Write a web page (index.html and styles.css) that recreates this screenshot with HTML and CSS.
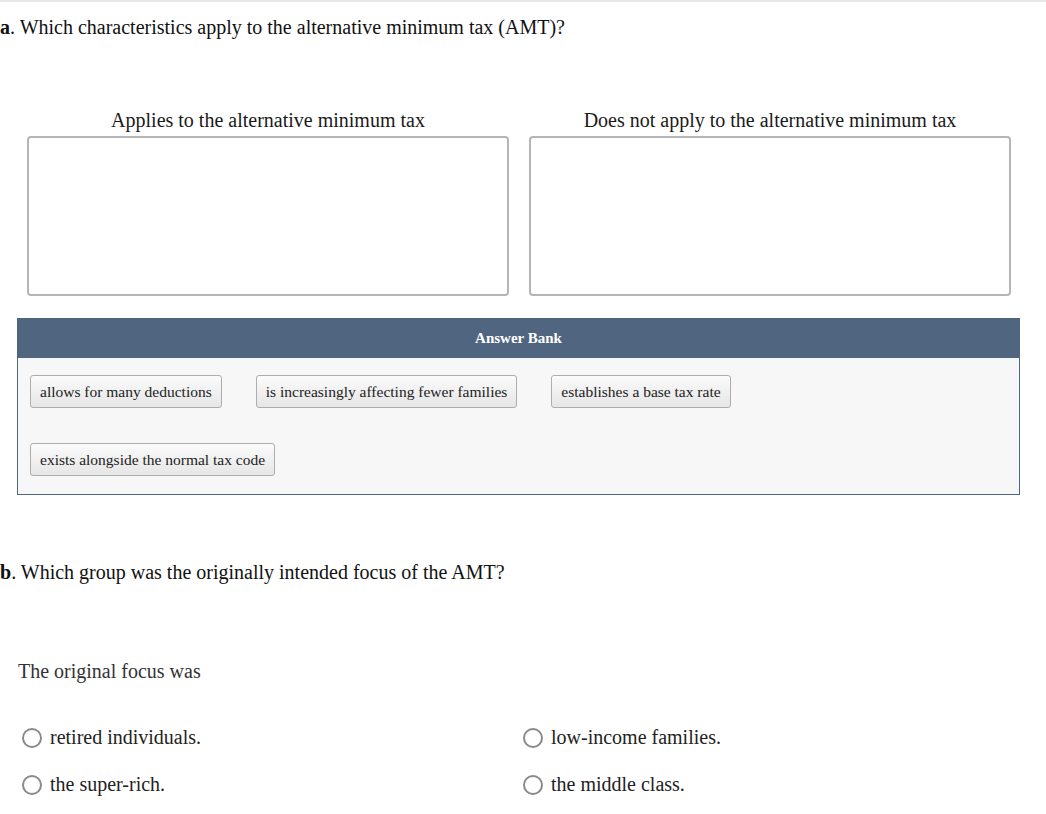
FILE: index.html
```html
<!DOCTYPE html>
<html>
<head>
<meta charset="utf-8">
<link rel="stylesheet" href="styles.css">
</head>
<body>
<div class="page">
  <h2 class="question"><b>a</b>. Which characteristics apply to the alternative minimum tax (AMT)?</h2>

  <div class="columns">
    <div class="col">
      <div class="col-label">Applies to the alternative minimum tax</div>
      <div class="dropbox"></div>
    </div>
    <div class="col">
      <div class="col-label">Does not apply to the alternative minimum tax</div>
      <div class="dropbox"></div>
    </div>
  </div>

  <div class="bank">
    <div class="bank-head">Answer Bank</div>
    <div class="bank-body">
      <span class="chip">allows for many deductions</span>
      <span class="chip">is increasingly affecting fewer families</span>
      <span class="chip">establishes a base tax rate</span>
      <span class="chip">exists alongside the normal tax code</span>
    </div>
  </div>

  <h2 class="question question-b"><b>b</b>. Which group was the originally intended focus of the AMT?</h2>

  <p class="prompt">The original focus was</p>

  <div class="options">
    <label class="option"><span class="radio"></span>retired individuals.</label>
    <label class="option"><span class="radio"></span>low-income families.</label>
    <label class="option"><span class="radio"></span>the super-rich.</label>
    <label class="option"><span class="radio"></span>the middle class.</label>
  </div>
</div>
</body>
</html>
```

FILE: styles.css
```css
html, body {
  margin: 0;
  padding: 0;
  background: #fff;
}

body {
  font-family: "Liberation Serif", "Times New Roman", serif;
  color: #222;
}

.page {
  border-top: 2px solid #e8e8e8;
  width: 1046px;
}

.question {
  margin: 14px 0 0 0;
  font-size: 20px;
  font-weight: normal;
  line-height: 23px;
  color: #111;
}

.question b {
  font-weight: bold;
}

.columns {
  display: grid;
  grid-template-columns: 482px 482px;
  column-gap: 20px;
  margin: 70px 0 0 27px;
}

.col-label {
  text-align: center;
  font-size: 20px;
  line-height: 23px;
  margin-bottom: 4px;
  color: #1a1a1a;
}

.dropbox {
  height: 156px;
  border: 2px solid #b5b5b5;
  border-radius: 4px;
  background: #fff;
}

.bank {
  margin: 22px 0 0 17px;
  width: 1003px;
  border: 1px solid #506580;
  box-sizing: border-box;
}

.bank-head {
  background: #506580;
  color: #fff;
  font-weight: bold;
  font-size: 15px;
  text-align: center;
  height: 39px;
  line-height: 39px;
}

.bank-body {
  background: #f7f7f7;
  padding: 17px 12px 18px 12px;
  display: flex;
  flex-wrap: wrap;
  column-gap: 34px;
  row-gap: 35px;
  align-items: flex-start;
}

.chip {
  display: inline-block;
  height: 33px;
  line-height: 31px;
  box-sizing: border-box;
  padding: 0 9px;
  font-size: 15.5px;
  color: #222;
  border: 1px solid #adadad;
  border-radius: 3px;
  background: linear-gradient(#fbfbfb, #e6e6e6);
  white-space: nowrap;
}

.question-b {
  margin-top: 66px;
}

.prompt {
  margin: 76px 0 0 18px;
  font-size: 20px;
  line-height: 23px;
  color: #333;
}

.options {
  display: grid;
  grid-template-columns: 501px 501px;
  row-gap: 24px;
  margin: 43px 0 0 22px;
}

.option {
  display: flex;
  align-items: center;
  font-size: 20px;
  line-height: 23px;
  color: #222;
}

.radio {
  width: 20px;
  height: 20px;
  box-sizing: border-box;
  border: 2px solid #8a8a8a;
  border-radius: 50%;
  margin-right: 8px;
  flex: none;
  background: #fff;
}
```
